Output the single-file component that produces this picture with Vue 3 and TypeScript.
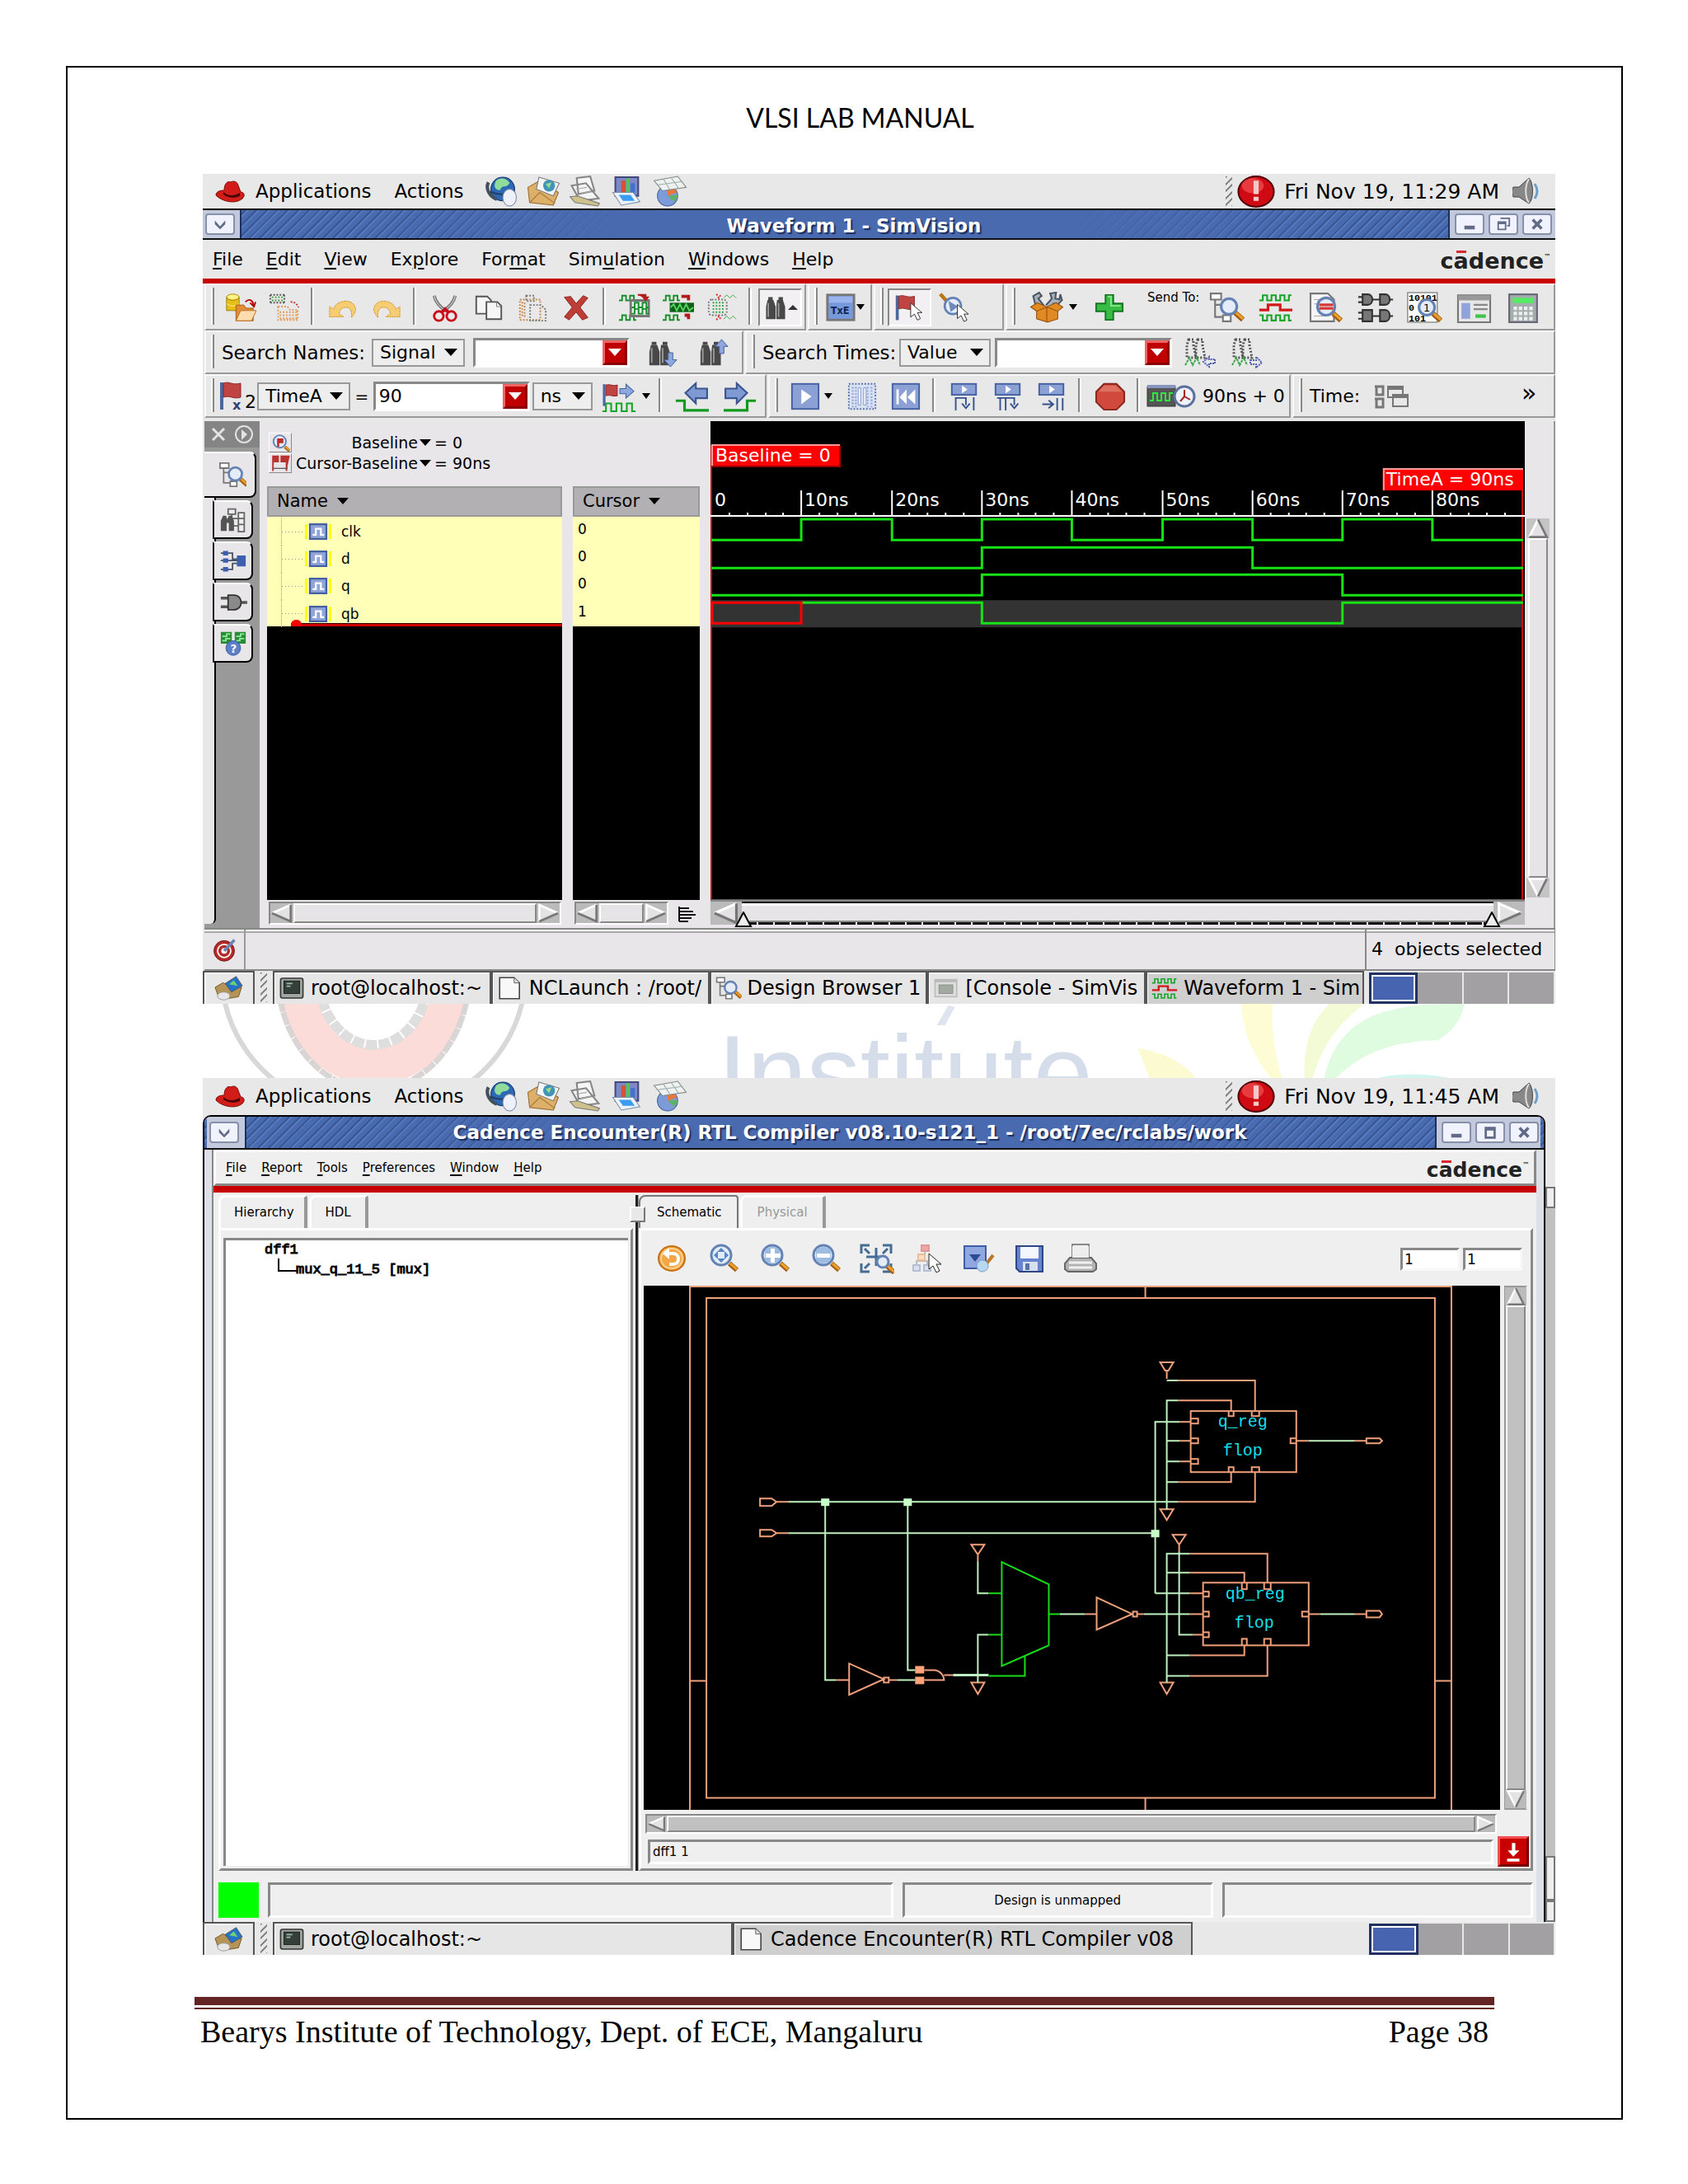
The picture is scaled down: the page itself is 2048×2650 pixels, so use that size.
<script setup lang="ts">
interface Signal { name: string; value: string; steps: [number, number][]; selected?: boolean }
interface Tool { icon: string; label: string }

const signals: Signal[] = [
  { name: 'clk', value: '0', steps: [[0, 0], [10, 1], [20, 0], [30, 1], [40, 0], [50, 1], [60, 0], [70, 1], [80, 0]] },
  { name: 'd', value: '0', steps: [[0, 0], [30, 1], [60, 0]] },
  { name: 'q', value: '0', steps: [[0, 0], [30, 1], [70, 0]] },
  { name: 'qb', value: '1', steps: [[10, 1], [30, 0], [70, 1]], selected: true },
]

const timeX = (ns: number): number => 1 + Math.round(ns * 10.93)
const rowTop = (row: number): number => Math.round(119 + row * 33.6)

function wavePath(signal: Signal, row: number): string {
  const y = (level: number): number => rowTop(row) + (level ? 0 : 25)
  const parts: string[] = []
  signal.steps.forEach(([time, level], i) => {
    parts.push(i === 0 ? `M${timeX(time)} ${y(level)}` : `V${y(level)}`)
    const next = signal.steps[i + 1]
    parts.push(`H${timeX(next ? next[0] : 90)}`)
  })
  return parts.join(' ')
}

const majorTicks: number[] = [0, 10, 20, 30, 40, 50, 60, 70, 80]
const minorTicks: number[] = Array.from({ length: 45 }, (_, i) => i * 2).filter((t) => t % 10 !== 0)

const outline = 'stroke="#555" stroke-width="2"'
const lens = (x: number, y: number, r: number): string =>
  `<path d="M${x + r - 2} ${y + r - 2}l9 8" stroke="#a35d12" stroke-width="6"/><path d="M${x + r - 1} ${y + r - 2}l8 7" stroke="#e9a02c" stroke-width="3"/><circle cx="${x}" cy="${y}" r="${r}" fill="#e3ecf8" stroke="#6483b4" stroke-width="3"/>`
const pulse = (x: number, y: number, c: string): string =>
  `<path d="M${x} ${y + 6}h4v-6h5v6h5v-6h5v6h3" fill="none" stroke="${c}" stroke-width="2"/>`
const bino = (c: string): string =>
  `<g fill="${c}"><path d="M5 8h8l3 9v17H3V17z"/><path d="M18 8h8l3 9v17H17V17z"/><path d="M6 4h6v4H6zM20 4h6v4h-6z"/></g><path d="M6 12v19M20 12v19" stroke="#999" stroke-width="2"/>`
const pointer = (x: number, y: number): string =>
  `<path d="M${x} ${y}v19l5-4 4 8 4-2-4-8h6z" fill="#fff" stroke="#222" stroke-width="1"/>`
const flag = '<path d="M4 2v33" stroke="#4c66a0" stroke-width="4"/><path d="M6 3c7-3 11 3 21 0v17c-9 3-13-3-21 0z" fill="#c04542" stroke="#8d2524"/>'
const blueBox = (x: number, y: number, w: number, h: number): string =>
  `<rect x="${x}" y="${y}" width="${w}" height="${h}" fill="#8ba0d4" stroke="#4460a0" stroke-width="2"/>`
const tree = '<path d="M7 5v24h10M7 15h10" fill="none" stroke="#777" stroke-width="2"/><path d="M2 2h12v7H2zM16 27h9v7h-9z" fill="#fff" stroke="#777" stroke-width="2"/>'

const icons: Record<string, string> = {
  hat: '<path d="M2 20c0-6 8-6 10-6 0-8 4-12 8-10 3-2 8-1 9 4l3 8c4 0 6 4 2 8-8 7-24 4-32-4z" fill="#d11c17" stroke="#7c0d0a"/><path d="M11 16c5 5 13 5 20 1v4c-7 3-15 2-20-2z" fill="#4a0505"/>',
  globe: '<circle cx="22" cy="16" r="14" fill="#2b68b6" stroke="#173564"/><path d="M14 6c6-5 14-2 16 3-4 7-9 1-11 8-5 1-9-4-5-11z" fill="#8fdc9b"/><path d="M5 8c-4 8 2 17 10 20" fill="none" stroke="#44505c" stroke-width="4"/><path d="M7 19c9 4 20 4 29 0" stroke="#243f66" fill="none" stroke-width="2"/><ellipse cx="30" cy="26" rx="8" ry="10" fill="#eef1fa" stroke="#7a86a5"/>',
  mail: '<path d="M2 14l14-8 22 14-6 15L4 32z" fill="#ddb06a" stroke="#95652a"/><path d="M4 32l12-12 18 13" fill="none" stroke="#a87638"/><path d="M15 2l24 7-7 15-20-8z" fill="#f4f5f7" stroke="#777"/><circle cx="27" cy="12" r="7" fill="#4095b9"/><path d="M23 10l7-2-3 7z" fill="#9cda8d"/>',
  writer: '<path d="M10 3l16-2 5 17-19 4zM4 12l17-3 15 18-22 3z" fill="#f5f5f5" stroke="#858585" stroke-width="2"/><path d="M9 16l13-2M14 21l13-2" stroke="#aaa"/><path d="M2 25l9-1 26 9-2 3-27-4z" fill="#cfc18c" stroke="#777"/>',
  impress: '<path d="M6 2h27v22H6z" fill="#7d88c4" stroke="#42487c" stroke-width="2"/><path d="M13 6h5v16h-5z" fill="#d6503e"/><path d="M19 3h4v19h-4z" fill="#56c257"/><path d="M24 9h5v12h-5z" fill="#3b73d0"/><path d="M3 20h24l8 11-22 4z" fill="#edf2fb" stroke="#7a8faa"/><path d="M10 23h14l5 7H15z" fill="#3a9df2"/>',
  calc: '<circle cx="18" cy="24" r="12" fill="#7c9bd8" stroke="#42639d"/><path d="M18 24V12a12 12 0 0 1 11 8z" fill="#e9763a"/><path d="M18 24l12-1a12 12 0 0 1-4 8z" fill="#5eb464"/><path d="M2 6l28-5 10 13-28 4z" fill="#eef1ef" stroke="#7c8884"/><path d="M7 11l28-4M13 4l8 13M22 2l9 13" stroke="#9aabab"/>',
  alert: '<ellipse cx="22" cy="19" rx="21" ry="18" fill="#d00a12" stroke="#520206" stroke-width="2"/><ellipse cx="18" cy="12" rx="13" ry="9" fill="#ff6c6c" opacity=".5"/><path d="M19 6h6v16h-6zM19 25h6v5h-6z" fill="#f5c9c9"/>',
  speaker: '<path d="M1 12h7L20 1c6 6 6 26 0 31L8 24H1c-2-4-2-8 0-12z" fill="#888" stroke="#444"/><path d="M20 2c-5 8-5 22 0 29" stroke="#ddd" fill="none" stroke-width="2"/><path d="M27 8c4 6 4 12 0 18" fill="none" stroke="#6ca0cc" stroke-width="3"/>',
  open: '<ellipse cx="10" cy="5" rx="8" ry="4" fill="#fff387" stroke="#aa8600"/><path d="M2 5v17h16V5c-2 5-14 5-16 0z" fill="#e6c019" stroke="#9b7a00"/><path d="M2 13c4 4 12 4 16 0" stroke="#fff18b" fill="none"/><path d="M14 15h10l3 4h9v16H14z" fill="#e28c36" stroke="#a9530d"/><path d="M14 35l6-13h20l-6 13z" fill="#ffdcae" stroke="#b66a25"/><path d="M26 11c5-5 10-2 10 4m-4-3l5 5 2-6" stroke="#b40000" stroke-width="2" fill="none"/>',
  openOff: '<g stroke-dasharray="2 2" stroke-width="2" fill="none"><path d="M2 2h18M2 12h18M2 2v11M20 2v11" stroke="#555"/><path d="M4 5h14M4 9h14" stroke="#3a9d3a"/><path d="M12 17h12l3 4h10v13H12zM14 24h22M14 28h22M14 32h22" stroke="#e39a54"/><path d="M28 11c5 0 8 2 10 7" stroke="#c22"/></g>',
  undo: '<path d="M3 30V17l5 3c4-12 23-13 27-4 3 6 0 10-4 15 1-9-2-14-8-13-5 0-7 4-8 8l6 4z" fill="#f7cd74" stroke="#d28a15" stroke-dasharray="2 1"/>',
  redo: '<path d="M37 30V17l-5 3C28 8 9 7 5 16c-3 6 0 10 4 15-1-9 2-14 8-13 5 0 7 4 8 8l-6 4z" fill="#f7cd74" stroke="#d28a15" stroke-dasharray="2 1"/>',
  cut: '<path d="M6 3c2 9 8 15 16 20M33 3c-2 9-8 15-16 20" stroke="#777" stroke-width="4" fill="none"/><path d="M6 3c2 9 8 15 16 20M33 3c-2 9-8 15-16 20" stroke="#eee" stroke-width="1" fill="none"/><circle cx="12" cy="29" r="6" fill="none" stroke="#c90d1b" stroke-width="3"/><circle cx="28" cy="29" r="6" fill="none" stroke="#c90d1b" stroke-width="3"/><path d="M16 24l4-4 4 4" stroke="#c90d1b" stroke-width="4" fill="none"/>',
  copy: `<path d="M4 4h14l5 5v17H4z" fill="#f6f6f6" ${outline}/><path d="M17 11h14l5 5v17H17z" fill="#f6f6f6" ${outline}/><path d="M30 11v6h6" fill="none" stroke="#777"/>`,
  paste: '<g stroke-dasharray="2 2" stroke-width="2" fill="none"><path d="M4 8h26v26H4zM7 11v20M10 12v20" stroke="#c68448"/><path d="M12 3h10v7H12zM17 15h14l6 6v14H17z" stroke="#777"/></g>',
  del: '<path d="M5 5l8-1 7 9 9-10 6 3-10 12 10 13-7 3-8-10-9 10-6-4 10-12z" fill="#bc3e36" stroke="#8c211c"/>',
  waveAdd: `${pulse(0, 3, '#178f28')}${pulse(0, 28, '#178f28')}<path d="M15 9h23v20H15z" fill="#e5eee5" stroke="#777" stroke-width="3"/>${pulse(16, 12, '#178f28')}${pulse(16, 20, '#178f28')}<path d="M24 2h10v5m-3-2h6l-3 4z" stroke="#b41c1c" stroke-width="2" fill="#b41c1c"/>`,
  waveMid: `${pulse(0, 3, '#178f28')}${pulse(0, 28, '#178f28')}<path d="M9 12h31v12H9z" fill="#125e1b"/><path d="M10 18l4-4 4 8 4-8 4 8 4-8 4 8 5-4" stroke="#50d85b" stroke-width="2" fill="none"/><path d="M24 4h9v5M28 28h5v5" stroke="#b41c1c" stroke-width="4" fill="none"/>`,
  waveOff: '<g fill="none" stroke-width="2" stroke-dasharray="2 2"><rect x="3" y="8" width="23" height="20" rx="4" stroke="#777"/><path d="M8 12h14M8 16h14M8 20h14M8 24h14" stroke="#2ba33a"/><path d="M13 1l3 5 3-5M13 34l3-5 3 5" stroke="#d22"/></g><path d="M22 6l4-4 4 4 4-4 4 4M22 33l4-4 4 4 4-4 4 4" stroke="#3aa548" fill="none"/>',
  bino: bino('#484848'),
  txe: '<rect x="3" y="2" width="34" height="32" fill="#7898dc" stroke="#777" stroke-width="3"/><path d="M5 4h30v8H5z" fill="#9ab5ee"/><text x="7" y="26" font-family="DejaVu Sans" font-weight="bold" font-size="12" fill="#112755">TxE</text>',
  flagPointer: flag + pointer(22, 12),
  lensPointer: '<path d="M3 2l10 11" stroke="#b87618" stroke-width="5"/><circle cx="20" cy="18" r="11" fill="#e5edfa" stroke="#6483b4" stroke-width="3"/><path d="M14 11l13 8-10 7z" fill="#7189b8"/>' + pointer(26, 16),
  box: '<path d="M8 17L5 5l7-4 3 4-4 3 7 9M20 16l7-8-2-6 7-1-1 7 5 1 1-6 2 7-5 5-5-1-5 7" fill="#a5b1bd" stroke="#4c5660" stroke-width="2"/><path d="M2 18l8-5 11 5 11-5 8 5-6 5v9l-12 4-13-4v-9z" fill="#e18a23" stroke="#8f4c08"/><path d="M21 18v18M9 23l12-5 13 5" fill="none" stroke="#8f4c08"/>',
  plus: '<path d="M15 3h10v11h12v10H25v11H15V24H3V14h12z" fill="#37bc45" stroke="#167522" stroke-width="2"/><path d="M18 5h4v12h12" fill="none" stroke="#8be78f" stroke-width="2"/>',
  treeLens: tree + lens(23, 17, 9),
  waves: '<path d="M1 10h4V4h5v6h5V4h5v6h5V4h5v6h5V4h3M1 27h4v6h5v-6h5v6h5v-6h5v6h5v-6h5v6h3" stroke="#15a527" stroke-width="2" fill="none"/><path d="M1 21h10v-6h14v6h14" stroke="#d21919" stroke-width="3" fill="none"/>',
  docLens: `<path d="M3 2h20l7 7v25H3z" fill="#f6f6f6" stroke="#777" stroke-width="2"/><path d="M7 9h13M7 14h12M7 28h14" stroke="#aaa"/>${lens(21, 17, 10)}<path d="M13 15h16M13 19h16" stroke="#d53a36" stroke-width="3"/>`,
  gates: '<g fill="#777" stroke="#333" stroke-width="2"><path d="M6 3h6c7 0 7 12 0 12H6zM26 3h6c7 0 7 12 0 12h-6zM6 21h11v13H6zM26 21h6c7 0 7 13 0 13h-6z"/></g><path d="M1 6h5M1 12h5M17 9h9M1 24h5M1 31h5M17 28h9M38 9h3M38 28h3" stroke="#333" stroke-width="2"/>',
  bits: `<rect x="1" y="1" width="34" height="34" fill="#fff" stroke="#666"/><g font-family="Liberation Mono" font-size="11" font-weight="bold"><text x="2" y="10">10101</text><text x="2" y="22">0</text><text x="2" y="34">101</text></g>${lens(23, 18, 9)}<text x="19" y="23" font-family="DejaVu Sans" font-size="12">1</text>`,
  pane: '<path d="M2 4h37v31H2z" fill="#e7e7e7" stroke="#777" stroke-width="2"/><path d="M2 4h37v6H2z" fill="#999"/><path d="M6 13h10v18H6z" fill="#8fa3da"/><path d="M20 15h16M20 20h16" stroke="#888" stroke-width="2"/><path d="M22 26h12v4H22z" fill="#3ec24a"/>',
  calculator: '<rect x="4" y="3" width="32" height="32" fill="#a4adad" stroke="#667" stroke-width="2"/><path d="M8 7h24v6H8z" fill="#53ec62"/><path d="M9 19h22M9 25h22M9 31h22" stroke="#eee" stroke-width="4" stroke-dasharray="4 2"/>',
  findDown: bino('#484848') + '<path d="M27 18h6v9h5l-8 9-8-9h5z" fill="#8ea8de" stroke="#45609e"/>',
  findUp: bino('#484848') + '<path d="M27 19h6v-9h5l-8-9-8 9h5z" fill="#8ea8de" stroke="#45609e"/>',
  findPrev: '<path d="M6 3h6v7l3 15H4V10zM17 3h6v7l3 15H15V10z" fill="none" stroke="#555" stroke-width="3" stroke-dasharray="2 2"/><path d="M2 34l5-9 4 9 5-9 4 9" stroke="#3aa548" fill="none" stroke-width="2" stroke-dasharray="3 1"/><path d="M38 27v5h-7v4l-7-6 7-6v3z" fill="none" stroke="#5560b5" stroke-width="2" stroke-dasharray="2 1"/>',
  findNext: '<path d="M6 3h6v7l3 15H4V10zM17 3h6v7l3 15H15V10z" fill="none" stroke="#555" stroke-width="3" stroke-dasharray="2 2"/><path d="M2 34l5-9 4 9 5-9 4 9" stroke="#3aa548" fill="none" stroke-width="2" stroke-dasharray="3 1"/><path d="M24 28h7v-4l7 7-7 6v-4h-7z" fill="none" stroke="#5560b5" stroke-width="2" stroke-dasharray="2 1"/>',
  flagTwo: flag + '<text x="17" y="35" font-family="DejaVu Sans" font-size="16" font-weight="bold" fill="#2d4376">x</text>',
  flagWave: '<path d="M3 4v25" stroke="#4c66a0" stroke-width="3"/><path d="M5 5c5-2 8 2 13 0v12c-5 2-8-2-13 0z" fill="#c04542" stroke="#8d2524"/><path d="M21 9h7V4l9 8-9 8v-5h-7z" fill="#8ea8de" stroke="#45609e"/><path d="M1 35h4v-9h6v9h6v-9h6v9h6v-9h6v9h4" fill="none" stroke="#15a527" stroke-width="2"/>',
  edgeLeft: '<path d="M12 14L24 3v6h13v11H24v6z" fill="#7f9ad3" stroke="#3a5591" stroke-width="2"/><path d="M1 23h10v11h28" fill="none" stroke="#0f9a1e" stroke-width="3"/>',
  edgeRight: '<path d="M29 14L17 3v6H4v11h13v6z" fill="#7f9ad3" stroke="#3a5591" stroke-width="2"/><path d="M2 34h27V23h10" fill="none" stroke="#0f9a1e" stroke-width="3"/>',
  play: blueBox(3, 2, 34, 32) + '<path d="M15 9l13 9-13 10z" fill="#fff"/>',
  pause: '<rect x="3" y="2" width="34" height="32" fill="#d8e0f2" stroke="#5470b0" stroke-width="2" stroke-dasharray="2 2"/><path d="M8 6v26M32 6v26M27 6v26M12 6v26" stroke="#8aa0d4" stroke-width="2" stroke-dasharray="2 2"/><path d="M15 7h3v22h-3zM22 7h3v22h-3z" fill="#fff" stroke="#7c94cc"/>',
  rewind: blueBox(3, 2, 34, 32) + '<path d="M8 9h3v19H8zM21 9v19l-9-9zM32 9v19l-10-9z" fill="#fff"/>',
  stepIn: blueBox(4, 2, 31, 14) + '<path d="M17 4l7 5-7 5z" fill="#fff"/><path d="M9 19v17M9 20h13v9m-5-2l5 6 5-6M32 19v17" stroke="#35508e" stroke-width="2" fill="none"/>',
  stepOver: blueBox(4, 2, 31, 14) + '<path d="M17 4l7 5-7 5z" fill="#fff"/><path d="M6 20h22v9m-5-2l5 6 5-6M10 20v16M17 20v16" stroke="#35508e" stroke-width="2" fill="none"/>',
  stepOut: blueBox(4, 2, 31, 14) + '<path d="M17 4l7 5-7 5z" fill="#fff"/><path d="M8 28h13m-5-5l6 5-6 5M27 20v16M34 20v16" stroke="#35508e" stroke-width="2" fill="none"/>',
  stop: '<path d="M12 2h16l10 10v13L28 35H12L2 25V12z" fill="#d0493c" stroke="#87241c" stroke-width="2"/><path d="M12 4h15l8 8H5z" fill="#e88a7c" opacity=".6"/>',
  clock: '<rect x="1" y="6" width="34" height="24" fill="#555" stroke="#333"/><path d="M1 4h34v4H1z" fill="#8695bd"/><path d="M4 23h4v-9h5v9h5v-9h5v9h5v-9h4" fill="none" stroke="#2ee83d" stroke-width="2"/><circle cx="46" cy="18" r="12" fill="#eef3fc" stroke="#5b719d" stroke-width="3"/><path d="M46 10v8l7 4M46 18l-5 6" stroke="#a22" fill="none" stroke-width="2"/>',
  panes: '<g fill="none" stroke="#777" stroke-width="3"><path d="M3 5h10v10H5V5M3 20h10v10H5V20"/></g><rect x="19" y="5" width="18" height="13" fill="#e8e8e8" stroke="#777" stroke-width="2"/><path d="M19 5h18v4H19z" fill="#777"/><rect x="25" y="15" width="18" height="14" fill="#e8e8e8" stroke="#777" stroke-width="2"/><path d="M25 15h18v4H25z" fill="#777"/>',
  binoTree: '<path d="M12 3h10v7H12zM26 8h8v26h-8zM17 10v6h9M17 16v10h9M26 16h8M26 24h8" fill="#eee" stroke="#666" stroke-width="2"/><path d="M2 19l3-7h4l2 5 2-5h4l3 7v14h-7V22h-3v11H2z" fill="#555"/>',
  nodes: '<path d="M2 7h16v8h10M2 17h26M2 29h16v-8h10" fill="none" stroke="#456" stroke-width="2"/><path d="M5 4h7v6H5zM5 14h7v6H5zM5 26h7v6H5zM24 10h12v15H24z" fill="#3e5fae"/>',
  gate: '<path d="M2 12h10M2 24h10M30 18h8" stroke="#555" stroke-width="4"/><path d="M12 8h8c13 0 13 20 0 20h-8z" fill="#8a8a8a" stroke="#333" stroke-width="2"/>',
  help: '<path d="M2 2h15v16H2zM21 2h15v16H21z" fill="#2a8a38"/><path d="M4 8h6v-3h5M4 14h5v-3h6M23 8h6v-3h5M23 14h5v-3h6" stroke="#8af097" fill="none" stroke-width="2"/><circle cx="19" cy="24" r="10" fill="#5b7fc8" stroke="#34569c"/><text x="15" y="30" font-family="DejaVu Sans" font-size="15" font-weight="bold" fill="#fff">?</text>',
  target: '<circle cx="17" cy="20" r="14" fill="#b52a25" stroke="#661311"/><circle cx="17" cy="20" r="9" fill="none" stroke="#fff" stroke-width="2"/><circle cx="17" cy="20" r="4" fill="#fff"/><path d="M17 20L31 5" stroke="#6a84b8" stroke-width="4"/>',
  desktop: '<path d="M2 17l10-6 10 5 14 1-4 12-12 2-14-3z" fill="#b69458" stroke="#705522"/><path d="M15 12L29 3l8 12-14 8z" fill="#2374c9" stroke="#555"/><path d="M20 13l6-5 5 7z" fill="#70d170"/><ellipse cx="13" cy="28" rx="8" ry="5" fill="#e7e7e7" stroke="#999"/>',
  terminal: '<rect x="3" y="3" width="34" height="30" rx="3" fill="#a0a6a0" stroke="#333" stroke-width="2"/><rect x="8" y="7" width="24" height="19" fill="#344039" stroke="#111"/><path d="M12 11h9M12 15h6" stroke="#9fb7a5" stroke-width="2"/>',
  page: '<path d="M4 2h22l8 8v24H4z" fill="#f8f8f8" stroke="#444" stroke-width="2"/><path d="M26 2v8h8" fill="#ddd" stroke="#444"/>',
  console: '<rect x="3" y="5" width="33" height="26" fill="#ddd" stroke="#bbb" stroke-width="2"/><path d="M3 5h33v4H3z" fill="#bbb"/><rect x="9" y="13" width="21" height="13" fill="#a2aaa2" stroke="#7d877d"/>',
  refresh: '<ellipse cx="20" cy="18" rx="16" ry="15" fill="#f4a644" stroke="#c66e12" stroke-width="2"/><ellipse cx="20" cy="18" rx="13" ry="12" fill="none" stroke="#fbd08f" stroke-width="2"/><path d="M14 12h8c8 0 8 13 0 13h-5" fill="none" stroke="#fff" stroke-width="4"/><path d="M9 12l8-7v14z" fill="#fff"/>',
  zoomFit: lens(18, 14, 12) + '<path d="M18 5l5 5H13zM18 23l5-5H13zM9 14l5-5v10zM27 14l-5-5v10z" fill="#5688c9"/>',
  zoomIn: lens(18, 14, 12) + '<path d="M9 8a12 12 0 0 1 18 0v12a12 12 0 0 1-18 0z" fill="#9dbce2"/><path d="M16 6h5v6h6v5h-6v6h-5v-6h-6v-5h6z" fill="#fff"/>',
  zoomOut: lens(18, 14, 12) + '<path d="M9 8a12 12 0 0 1 18 0v12a12 12 0 0 1-18 0z" fill="#9dbce2"/><path d="M10 12h16v5H10z" fill="#fff"/>',
  zoomArea: '<path d="M2 12V2h10M28 2h10v10M2 24v10h10M38 24v10H28M20 5v22M8 16h24M6 6l6 6M34 6l-6 6M6 30l6-6" fill="none" stroke="#456d94" stroke-width="3"/>' + lens(28, 22, 7),
  hierarchy: '<path d="M17 8v8M7 27v-6h13v6M13 16v5" fill="none" stroke="#bbb" stroke-width="2"/><g stroke-width="2"><path d="M13 2h9v7h-9z" fill="#f3a6a6" stroke="#dd9a9a"/><path d="M9 13h8v7H9z" fill="#fce0c4" stroke="#e8bf98"/><path d="M3 26h8v7H3zM16 26h8v7h-8z" fill="#dbe1ee" stroke="#b4bdd2"/></g>' + pointer(22, 12),
  dropLens: '<rect x="3" y="3" width="26" height="27" fill="#90a7e0" stroke="#3f5ca6" stroke-width="2"/><path d="M9 13h14l-7 9z" fill="#2b4b96"/><path d="M30 24l8-10" stroke="#b97529" stroke-width="4"/><circle cx="25" cy="27" r="7" fill="#b9d7f0" stroke="#6ba0cc"/>',
  save: '<path d="M4 3h32v31H8l-4-4z" fill="#6583cf" stroke="#2f4688" stroke-width="2"/><path d="M9 4h22v14H9z" fill="#f4f7fc"/><path d="M12 22h18v11H12z" fill="#d9dfec"/><path d="M15 24h5v8h-5z" fill="#5572b2"/>',
  print: '<path d="M10 1h20v17H10z" fill="#eee" stroke="#888" stroke-width="2"/><path d="M7 17h26l6 7v7l-4 3H5l-4-3v-7z" fill="#b4b4b4" stroke="#666" stroke-width="2"/><path d="M6 23h28M6 29h28" stroke="#f0f0f0" stroke-width="3"/><path d="M10 3h20v14H10z" fill="#eee"/>',
  download: '<path d="M13 5h5v11h6l-9 9-8-9h6zM6 28h18v4H6z" fill="#fff"/>',
  probe: lens(18, 15, 12) + '<path d="M13 9h12v9h-8v7h-4z" fill="#bd2b2e"/>',
  span: '<path d="M5 32V4h10v10H7M31 32V4h6M31 4H21v10h9" fill="#b9332f" stroke="#b9332f" stroke-width="3"/><path d="M5 27h28" stroke="#555" stroke-width="2"/>',
  wave: '<rect x="2" y="2" width="36" height="32" fill="#91a5d8" stroke="#4460a0" stroke-width="4"/><path d="M8 25h7V12h11v13h7" fill="none" stroke="#fff" stroke-width="4"/>',
  left: '<path d="M2 18L36 3v30z" fill="#e4e2e4"/><path d="M2 18L36 3" stroke="#fff" stroke-width="4"/><path d="M2 18l34 15V3" fill="none" stroke="#777" stroke-width="4"/>',
  right: '<path d="M38 18L4 3v30z" fill="#e4e2e4"/><path d="M4 33V3l34 15" stroke="#fff" stroke-width="4" fill="none"/><path d="M38 18L4 33" stroke="#777" stroke-width="4"/>',
  up: '<path d="M20 2L4 34h32z" fill="#e4e2e4"/><path d="M4 34L20 2" stroke="#fff" stroke-width="4"/><path d="M20 2l16 32H4" fill="none" stroke="#777" stroke-width="4"/>',
  down: '<path d="M20 34L4 2h32z" fill="#e4e2e4"/><path d="M20 34L4 2h32" stroke="#fff" fill="none" stroke-width="4"/><path d="M36 2L20 34" stroke="#777" stroke-width="4"/>',
}

const launchers: Tool[] = [
  { icon: 'globe', label: 'Web browser' },
  { icon: 'mail', label: 'Email' },
  { icon: 'writer', label: 'Word processor' },
  { icon: 'impress', label: 'Presentation' },
  { icon: 'calc', label: 'Spreadsheet' },
]
const editTools: Tool[][] = [
  [{ icon: 'open', label: 'Open database' }, { icon: 'openOff', label: 'Close database' }],
  [{ icon: 'undo', label: 'Undo' }, { icon: 'redo', label: 'Redo' }],
  [{ icon: 'cut', label: 'Cut' }, { icon: 'copy', label: 'Copy' }, { icon: 'paste', label: 'Paste' }, { icon: 'del', label: 'Delete' }],
  [{ icon: 'waveAdd', label: 'Expand' }, { icon: 'waveMid', label: 'Collapse' }, { icon: 'waveOff', label: 'Ungroup' }],
]
const sendTools: Tool[] = [
  { icon: 'treeLens', label: 'Design browser' },
  { icon: 'waves', label: 'Waveform' },
  { icon: 'docLens', label: 'Source browser' },
  { icon: 'gates', label: 'Schematic' },
  { icon: 'bits', label: 'Memory viewer' },
  { icon: 'pane', label: 'Register' },
  { icon: 'calculator', label: 'Calculator' },
]
const dockTabs: Tool[] = [
  { icon: 'treeLens', label: 'Browser' },
  { icon: 'binoTree', label: 'Search' },
  { icon: 'nodes', label: 'Drivers' },
  { icon: 'gate', label: 'Cells' },
  { icon: 'help', label: 'Groups' },
]
const schematicTools: Tool[] = [
  { icon: 'refresh', label: 'Redraw' },
  { icon: 'zoomFit', label: 'Zoom fit' },
  { icon: 'zoomIn', label: 'Zoom in' },
  { icon: 'zoomOut', label: 'Zoom out' },
  { icon: 'zoomArea', label: 'Zoom area' },
  { icon: 'hierarchy', label: 'Hierarchy' },
  { icon: 'dropLens', label: 'Probe' },
  { icon: 'save', label: 'Save' },
  { icon: 'print', label: 'Print' },
]
const simMenus: [string, string, string][] = [
  ['', 'F', 'ile'], ['', 'E', 'dit'], ['', 'V', 'iew'], ['Ex', 'p', 'lore'], ['For', 'm', 'at'],
  ['Sim', 'u', 'lation'], ['', 'W', 'indows'], ['', 'H', 'elp'],
]
const rtlMenus: string[] = ['File', 'Report', 'Tools', 'Preferences', 'Window', 'Help']
const simTasks: { icon: string; text: string }[] = [
  { icon: 'terminal', text: 'root@localhost:~' },
  { icon: 'page', text: 'NCLaunch : /root/' },
  { icon: 'treeLens', text: 'Design Browser 1' },
  { icon: 'console', text: '[Console - SimVis' },
  { icon: 'waves', text: 'Waveform 1 - Sim' },
]
const rtlTasks: { icon: string; text: string }[] = [
  { icon: 'terminal', text: 'root@localhost:~' },
  { icon: 'page', text: 'Cadence Encounter(R) RTL Compiler v08' },
]
</script>

<template>
  <main class="sheet">
    <header class="running-head">VLSI LAB MANUAL</header>

    <section class="shot">
      <nav class="panel">
        <svg class="hat" viewBox="0 0 38 30" v-html="icons.hat"></svg>
        <a href="#" class="apps">Applications</a><a href="#" class="acts">Actions</a>
        <button v-for="l in launchers" :key="l.icon" class="launch" :aria-label="l.label"><svg viewBox="0 0 42 37" v-html="icons[l.icon]"></svg></button>
        <span class="grow"></span><i class="grip"></i>
        <svg class="alert" viewBox="0 0 44 38" v-html="icons.alert"></svg>
        <time>Fri Nov 19, 11:29 AM</time>
        <svg class="speaker" viewBox="0 0 34 34" v-html="icons.speaker"></svg>
      </nav>

      <div class="titlebar">
        <span class="frame-cell"><button aria-label="Window menu"><svg viewBox="0 0 20 20"><path d="M3 5l7 8 7-8v5l-7 7-7-7z" fill="#616a86" /></svg></button></span>
        <h2>Waveform 1 - SimVision</h2>
        <span class="frame-cell end">
          <button aria-label="Minimize"><svg viewBox="0 0 20 20"><path d="M3 12h14v5H3z" fill="#616a86" /></svg></button>
          <button aria-label="Restore"><svg viewBox="0 0 20 20"><path d="M6 2h12v10h-3M3 7h10v10H3zM3 9h10" fill="none" stroke="#616a86" stroke-width="2" /></svg></button>
          <button aria-label="Close"><svg viewBox="0 0 20 20"><path d="M4 4l12 12M16 4L4 16" stroke="#616a86" stroke-width="4" /></svg></button>
        </span>
      </div>

      <nav class="menus sim">
        <a v-for="m in simMenus" :key="m[1] + m[2]" href="#">{{ m[0] }}<u>{{ m[1] }}</u>{{ m[2] }}</a>
        <span class="brand">c<b>a</b>dence<small>™</small></span>
      </nav>
      <div class="redline"></div>

      <div class="bar tall">
        <div class="group">
          <i class="handle"></i>
          <template v-for="(set, s) in editTools" :key="s">
            <button v-for="t in set" :key="t.icon" class="tool" :aria-label="t.label"><svg viewBox="0 0 40 36" v-html="icons[t.icon]"></svg></button>
            <i class="sep"></i>
          </template>
          <button class="tool pressed" aria-label="Search"><svg class="half" viewBox="0 0 32 36" v-html="icons.bino"></svg><i class="caret up"></i></button>
        </div>
        <div class="group">
          <i class="handle"></i>
          <button class="tool drop" aria-label="Text format"><svg viewBox="0 0 40 36" v-html="icons.txe"></svg><i class="caret small"></i></button>
        </div>
        <div class="group cursors">
          <i class="handle"></i>
          <button class="tool pressed" aria-label="Cursor mode"><svg viewBox="0 0 42 36" v-html="icons.flagPointer"></svg></button>
          <button class="tool" aria-label="Zoom mode"><svg viewBox="0 0 42 40" v-html="icons.lensPointer"></svg></button>
        </div>
        <div class="group wide tools">
          <i class="handle"></i>
          <button class="tool kit" aria-label="Tools"><svg class="big" viewBox="0 0 42 37" v-html="icons.box"></svg><i class="caret small"></i></button>
          <button class="tool add" aria-label="Add"><svg viewBox="0 0 40 38" v-html="icons.plus"></svg></button>
          <span class="send">Send To:</span>
          <div class="sendset">
            <button v-for="t in sendTools" :key="t.icon" class="tool" :aria-label="t.label"><svg class="big" viewBox="0 0 42 36" v-html="icons[t.icon]"></svg></button>
          </div>
        </div>
      </div>

      <div class="bar">
        <div class="group names">
          <i class="handle"></i>
          <label for="names">Search Names:</label>
          <span class="combo signal"><select id="names"><option>Signal</option></select><i class="caret"></i></span>
          <span class="entry first"><input type="text" aria-label="Search names text" /><button aria-label="History"><i class="caret white"></i></button></span>
          <button class="tool find" aria-label="Find next"><svg viewBox="0 0 40 36" v-html="icons.findDown"></svg></button>
          <button class="tool find" aria-label="Find previous"><svg viewBox="0 0 40 36" v-html="icons.findUp"></svg></button>
        </div>
        <div class="group wide">
          <i class="handle"></i>
          <label for="times">Search Times:</label>
          <span class="combo value"><select id="times"><option>Value</option></select><i class="caret"></i></span>
          <span class="entry later"><input type="text" aria-label="Search times text" /><button aria-label="History"><i class="caret white"></i></button></span>
          <button class="tool time" aria-label="Previous edge"><svg class="big" viewBox="0 0 40 38" v-html="icons.findPrev"></svg></button>
          <button class="tool time" aria-label="Next edge"><svg class="big" viewBox="0 0 40 38" v-html="icons.findNext"></svg></button>
        </div>
      </div>

      <div class="bar">
        <div class="group timea">
          <i class="handle"></i>
          <span class="flagtwo"><svg viewBox="0 0 32 38" v-html="icons.flagTwo"></svg>2</span>
          <span class="combo cursor"><select aria-label="Cursor"><option>TimeA</option></select><i class="caret"></i></span>
          <span class="eq">=</span>
          <span class="entry first"><input type="text" value="90" aria-label="Cursor time" /><button aria-label="History"><i class="caret white"></i></button></span>
          <span class="combo unit"><select aria-label="Unit"><option>ns</option></select><i class="caret"></i></span>
          <button class="tool goto" aria-label="Go to cursor"><svg class="big" viewBox="0 0 40 36" v-html="icons.flagWave"></svg><i class="caret small"></i></button>
          <i class="sep"></i>
          <button class="tool edge" aria-label="Previous edge"><svg class="big" viewBox="0 0 40 36" v-html="icons.edgeLeft"></svg></button>
          <button class="tool edge" aria-label="Next edge"><svg class="big" viewBox="0 0 40 36" v-html="icons.edgeRight"></svg></button>
        </div>
        <div class="group run">
          <i class="handle"></i>
          <button class="tool kit" aria-label="Run"><svg viewBox="0 0 40 36" v-html="icons.play"></svg><i class="caret small"></i></button>
          <button class="tool" aria-label="Pause"><svg viewBox="0 0 40 36" v-html="icons.pause"></svg></button>
          <button class="tool" aria-label="Reset"><svg viewBox="0 0 40 36" v-html="icons.rewind"></svg></button>
          <i class="sep"></i>
          <button class="tool" aria-label="Step in"><svg viewBox="0 0 40 36" v-html="icons.stepIn"></svg></button>
          <button class="tool" aria-label="Step over"><svg viewBox="0 0 40 36" v-html="icons.stepOver"></svg></button>
          <button class="tool" aria-label="Step out"><svg viewBox="0 0 40 36" v-html="icons.stepOut"></svg></button>
          <i class="sep"></i>
          <button class="tool" aria-label="Stop"><svg viewBox="0 0 40 36" v-html="icons.stop"></svg></button>
          <i class="sep"></i>
          <svg class="clock" viewBox="0 0 60 36" v-html="icons.clock"></svg>
          <span class="now">90ns + 0</span>
        </div>
        <div class="group wide">
          <i class="handle"></i>
          <span class="timelabel">Time:</span>
          <svg class="panes" viewBox="0 0 46 34" v-html="icons.panes"></svg>
          <span class="grow"></span>
          <button class="more" aria-label="More">»</button>
        </div>
      </div>

      <div class="workspace">
        <aside class="dock">
          <div class="dock-head">
            <svg viewBox="0 0 56 24"><path d="M4 5l14 14M18 5L4 19" stroke="#e2e2e2" stroke-width="3" /><circle cx="42" cy="12" r="10" fill="none" stroke="#e2e2e2" stroke-width="2" /><path d="M39 6l7 6-7 7z" fill="#e2e2e2" /></svg>
          </div>
          <div class="dock-body">
            <button v-for="t in dockTabs" :key="t.icon" class="dock-tab" :aria-label="t.label"><svg viewBox="0 0 38 36" v-html="icons[t.icon]"></svg></button>
          </div>
        </aside>

        <div class="signals">
          <div class="info">
            <button aria-label="Baseline"><svg viewBox="0 0 38 34" v-html="icons.probe"></svg></button><span class="what">Baseline</span><i class="caret"></i><span>= 0</span>
            <button aria-label="Span"><svg viewBox="0 0 38 34" v-html="icons.span"></svg></button><span class="what">Cursor-Baseline</span><i class="caret"></i><span>= 90ns</span>
          </div>
          <div class="columns">
            <div class="col name-col">
              <div class="dark">
                <table>
                  <thead><tr><th>Name <i class="caret"></i></th></tr></thead>
                  <tbody><tr v-for="s in signals" :key="s.name"><td><i class="twig"></i><svg viewBox="0 0 40 36" v-html="icons.wave"></svg>{{ s.name }}</td></tr></tbody>
                </table>
                <i class="insertion"></i>
              </div>
              <div class="hscroll"><svg viewBox="0 0 40 36" v-html="icons.left"></svg><i class="thumb"></i><svg viewBox="0 0 40 36" v-html="icons.right"></svg></div>
            </div>
            <div class="col value-col">
              <div class="dark">
                <table>
                  <thead><tr><th>Cursor <i class="caret"></i></th></tr></thead>
                  <tbody><tr v-for="s in signals" :key="s.name"><td>{{ s.value }}</td></tr></tbody>
                </table>
              </div>
              <div class="pair">
                <div class="hscroll"><svg viewBox="0 0 40 36" v-html="icons.left"></svg><i class="thumb"></i><svg viewBox="0 0 40 36" v-html="icons.right"></svg></div>
                <svg class="lines" viewBox="0 0 24 20"><path d="M2 1v18M2 3h12M2 7h17M2 11h20M2 15h15M2 19h11" stroke="#111" stroke-width="2" fill="none" /></svg>
              </div>
            </div>
          </div>
        </div>

        <div class="waves">
          <svg class="plot" viewBox="0 0 987 580" role="img" aria-label="Waveforms">
            <rect width="987" height="580" fill="#000" />
            <rect y="217" width="985" height="33" fill="#333" />
            <path d="M1 29V580M984 84V580" stroke="#c60d0d" stroke-width="2" />
            <g font-family="DejaVu Sans, sans-serif" font-size="22" fill="#fff">
              <rect x="2" y="29" width="155" height="26" fill="#f00" /><path d="M2 55h155V30" fill="none" stroke="#900" stroke-width="2" />
              <path d="M2 54V29h155" stroke="#ff9b9b" stroke-width="2" fill="none" />
              <text x="6" y="49">Baseline = 0</text>
              <rect x="815" y="57" width="170" height="27" fill="#f00" />
              <path d="M816 84V58h169" stroke="#ff9b9b" stroke-width="2" fill="none" />
              <text x="819" y="78">TimeA = 90ns</text>
              <text v-for="t in majorTicks" :key="t" :x="timeX(t) + 4" y="103">{{ t === 0 ? '0' : t + 'ns' }}</text>
            </g>
            <g stroke="#fff" stroke-width="2">
              <path d="M0 115H987" />
              <path v-for="t in majorTicks.slice(1)" :key="'a' + t" :d="`M${timeX(t)} 84V115`" />
              <path v-for="t in minorTicks" :key="'i' + t" :d="`M${timeX(t)} 111V115`" />
            </g>
            <g fill="none" stroke="#16e216" stroke-width="3">
              <path v-for="(s, i) in signals" :key="s.name" :d="wavePath(s, i)" />
            </g>
            <path d="M2 220h108v25H2z" fill="none" stroke="#f00" stroke-width="3" />
          </svg>
          <div class="timescroll">
            <svg class="arrow" viewBox="0 0 40 36" v-html="icons.left"></svg>
            <div class="track">
              <svg class="mark" viewBox="0 0 22 20"><path d="M11 1l9 17H2z" fill="#eee" stroke="#000" stroke-width="2" /></svg>
              <svg class="mark" viewBox="0 0 22 20"><path d="M11 1l9 17H2z" fill="#eee" stroke="#000" stroke-width="2" /></svg>
            </div>
            <svg class="arrow" viewBox="0 0 40 36" v-html="icons.right"></svg>
          </div>
        </div>
        <div class="vscroll sim-v"><svg viewBox="0 0 40 36" v-html="icons.up"></svg><i class="thumb"></i><svg viewBox="0 0 40 36" v-html="icons.down"></svg></div>
      </div>

      <div class="statusbar">
        <span class="aim"><svg viewBox="0 0 34 36" v-html="icons.target"></svg></span>
        <span class="grow"></span>
        <span class="count">4&nbsp; objects selected</span>
      </div>

      <div class="taskbar">
        <button class="desk" aria-label="Show desktop"><svg viewBox="0 0 40 36" v-html="icons.desktop"></svg></button><i class="grip"></i>
        <button v-for="(t, i) in simTasks" :key="t.text" class="task" :class="{ active: i === 4 }"><svg viewBox="0 0 40 36" v-html="icons[t.icon]"></svg><span>{{ t.text }}</span></button>
        <div class="pager"><i class="on"></i><i></i><i></i><i></i></div>
      </div>
    </section>

    <svg class="watermark" viewBox="0 0 1640 90" aria-hidden="true">
      <g fill="none">
        <ellipse cx="207" cy="-36" rx="184" ry="170" stroke="#d8d8d8" stroke-width="6" />
        <ellipse cx="207" cy="-32" rx="94" ry="108" stroke="#fcdcd8" stroke-width="44" />
        <ellipse cx="207" cy="-36" rx="116" ry="140" stroke="#d9d5d5" stroke-width="7" stroke-dasharray="16 1" />
        <ellipse cx="207" cy="-32" rx="66" ry="82" stroke="#dedede" stroke-width="12" stroke-dasharray="14 2" />
      </g>
      <text x="624" y="129" font-family="Liberation Sans, sans-serif" font-size="130" fill="#d5dcea">Institute</text>
      <path d="M912 4l-12 22h-10l14-24z" fill="#dfe5ee" />
      <path d="M1134 54c26 4 52 14 70 36h-56z" fill="#fbfad0" />
      <path d="M1259 0h38c-1 30 2 60 12 90h-14c-22-28-33-54-36-90z" fill="#fdfcd4" />
      <path d="M1366 0h42c-30 24-50 48-62 90h-10c-2-40 8-68 30-90z" fill="#f3fbd6" />
      <path d="M1440 8c28-8 54-8 90-8-4 18-12 32-32 44-50 2-86 10-124 46h-14c8-44 40-74 80-82z" fill="#dffbe0" />
      <path d="M1425 90c20-6 60-6 86 0z" fill="#d3f5ef" />
    </svg>

    <section class="shot second">
      <nav class="panel">
        <svg class="hat" viewBox="0 0 38 30" v-html="icons.hat"></svg>
        <a href="#" class="apps">Applications</a><a href="#" class="acts">Actions</a>
        <button v-for="l in launchers" :key="l.icon" class="launch" :aria-label="l.label"><svg viewBox="0 0 42 37" v-html="icons[l.icon]"></svg></button>
        <span class="grow"></span><i class="grip"></i>
        <svg class="alert" viewBox="0 0 44 38" v-html="icons.alert"></svg>
        <time>Fri Nov 19, 11:45 AM</time>
        <svg class="speaker" viewBox="0 0 34 34" v-html="icons.speaker"></svg>
      </nav>

      <div class="desktop">
        <div class="rtl-window">
          <div class="titlebar">
            <span class="frame-cell"><button aria-label="Window menu"><svg viewBox="0 0 20 20"><path d="M3 5l7 8 7-8v5l-7 7-7-7z" fill="#616a86" /></svg></button></span>
            <h2>Cadence Encounter(R) RTL Compiler v08.10-s121_1 - /root/7ec/rclabs/work</h2>
            <span class="frame-cell end">
              <button aria-label="Minimize"><svg viewBox="0 0 20 20"><path d="M3 12h14v5H3z" fill="#616a86" /></svg></button>
              <button aria-label="Maximize"><svg viewBox="0 0 20 20"><path d="M4 4h12v13H4zM4 6h12" fill="none" stroke="#616a86" stroke-width="3" /></svg></button>
              <button aria-label="Close"><svg viewBox="0 0 20 20"><path d="M4 4l12 12M16 4L4 16" stroke="#616a86" stroke-width="4" /></svg></button>
            </span>
          </div>
          <div class="client">
            <nav class="menus rtl">
              <a v-for="m in rtlMenus" :key="m" href="#"><u>{{ m[0] }}</u>{{ m.slice(1) }}</a>
              <span class="brand">c<b>a</b>dence<small>™</small></span>
            </nav>
            <div class="redline"></div>
            <div class="split">
              <div class="left-pane">
                <div class="tabs"><button>Hierarchy</button><button>HDL</button></div>
                <div class="pane-body">
                  <div class="hierarchy"><p>dff1</p><p class="leaf">mux_q_11_5 [mux]</p></div>
                </div>
              </div>
              <div class="sash"></div>
              <div class="right-pane">
                <div class="tabs"><button class="front">Schematic</button><button class="off">Physical</button></div>
                <div class="pane-body">
                  <div class="sch-tools">
                    <button v-for="t in schematicTools" :key="t.icon" :aria-label="t.label"><svg viewBox="0 0 42 38" v-html="icons[t.icon]"></svg></button>
                    <span class="grow"></span>
                    <input type="text" value="1" aria-label="Page" /><input type="text" value="1" aria-label="Pages" />
                  </div>
                  <div class="view">
                    <svg class="schematic" viewBox="0 0 1038 636" role="img" aria-label="Schematic">
                      <rect width="1038" height="636" fill="#000" />
                      <g fill="none" stroke="#f0a07a" stroke-width="2">
                        <path d="M56 636V1h923v635M76 15h883v606H76zM608 1v14M608 621v15M56 479h20M959 479h20" />
                        <rect x="663" y="152" width="128" height="74" /><rect x="678" y="360" width="128" height="76" />
                        <path d="M663 161h9v6h-9M663 185h9v6h-9M663 210h9v6h-9M791 185h-7v6h7M709 152v6h6v-6M737 152v6h9v-6M709 226v-6h6v6M737 226v-6h9v6" />
                        <path d="M678 371h7v6h-7M678 395h7v6h-7M678 420h7v6h-7M806 395h-8v6h8M725 360v8h6v-8M752 360v8h8v-8M725 436v-8h6v8M752 436v-8h8v8" />
                        <path d="M634 104v9M648 115h93v37M648 139h64v13M650 165h13M650 188h13M650 213h13M648 238h64v-12M648 262h93v-36M791 188h15M862 188h14" />
                        <path d="M662 325h94v35M662 348h66v12M662 373h16M662 398h16M666 423h12M662 448h66v-12M662 473h94v-37M806 398h14M862 398h14" />
                        <path d="M876 185h16l3 3-3 3h-16zM876 394h16l3 4-3 4h-16zM141 258h14l6 4-6 5h-14zM141 296h14l6 4-6 4h-14zM161 262h14M161 300h14" />
                        <path d="M626 93h16l-6 10h-4zM626 271h16l-8 13zM641 302h16l-8 12zM397 314h16l-8 12zM397 481h16l-8 14zM626 481h16l-8 14zM405 326v8M649 314v8" />
                        <path d="M249 458v38l42-19zM291 475h6v6h-6zM549 378v39l43-19zM593 395h5v6h-5zM233 478h16M297 478h10M535 398h14M598 398h8M340 466h13c11 2 11 12 11 12H340M364 472h11" />
                      </g>
                      <path d="M329 461h11v9h-11zM329 474h11v9h-11z" fill="#ffa37a" />
                      <g fill="none" stroke="#bff0c0" stroke-width="2">
                        <path d="M175 262H648M175 300H620M220 262V478H233M320 262V466H329M620 373V165H650M620 373H662M634 115h14M634 271V139H648M634 188h16M634 213h16M634 238h14M806 188h56" />
                        <path d="M634 481V325H662M634 348h28M634 448h28M634 473h28M649 322V423H666M606 398H662M820 398h42M405 334V373H418M405 481V423H418M307 478h22M504 398h31" />
                        <path d="M375 472H418" stroke-width="3" />
                      </g>
                      <path d="M215 258h10v9h-10zM315 258h10v9h-10zM615 296h10v9h-10z" fill="#c8ffc8" />
                      <path d="M434 335l57 27v74l-57 25zM418 373h16M418 423h16M491 398h13M418 473h44V448" fill="none" stroke="#18dc18" stroke-width="2" />
                      <g font-family="Liberation Mono, monospace" font-size="20" fill="#14dfe6" stroke="none">
                        <text x="696" y="171">q_reg</text><text x="702" y="206">flop</text>
                        <text x="705" y="380">qb_reg</text><text x="716" y="415">flop</text>
                      </g>
                    </svg>
                    <div class="vscroll"><svg viewBox="0 0 40 36" v-html="icons.up"></svg><i class="thumb"></i><svg viewBox="0 0 40 36" v-html="icons.down"></svg></div>
                  </div>
                  <div class="hscroll"><svg viewBox="0 0 40 36" v-html="icons.left"></svg><i class="thumb"></i><svg viewBox="0 0 40 36" v-html="icons.right"></svg></div>
                  <div class="command">
                    <input type="text" value="dff1 1" aria-label="Selected object" />
                    <button aria-label="Descend"><svg viewBox="0 0 30 36" v-html="icons.download"></svg></button>
                  </div>
                </div>
              </div>
            </div>
            <div class="rtl-status">
              <i class="ready"></i><span class="cell long"></span><span class="cell">Design is unmapped</span><span class="cell"></span>
            </div>
          </div>
        </div>
        <div class="behind"><i></i><b></b><u></u><i></i></div>
      </div>

      <div class="taskbar">
        <button class="desk" aria-label="Show desktop"><svg viewBox="0 0 40 36" v-html="icons.desktop"></svg></button><i class="grip"></i>
        <button v-for="(t, i) in rtlTasks" :key="t.text" class="task double" :class="{ active: i === 1 }"><svg viewBox="0 0 40 36" v-html="icons[t.icon]"></svg><span>{{ t.text }}</span></button>
        <span class="grow"></span>
        <div class="pager"><i class="on"></i><i></i><i></i><i></i></div>
      </div>
    </section>

    <footer>
      <div class="rule"></div>
      <div class="foot-text"><span>Bearys Institute of Technology, Dept. of ECE, Mangaluru</span><span>Page 38</span></div>
    </footer>
  </main>
</template>

<style>
body { background: #fff; }
</style>

<style scoped>
* { box-sizing: border-box; }
.sheet { margin: 80px 79px 80px 80px; border: 2px solid #000; padding: 0 80px 80px 164px; background: #fff; color: #000; font-family: "DejaVu Sans", sans-serif; }
button { font: inherit; color: inherit; padding: 0; border: 0; background: none; margin: 0; display: flex; align-items: center; justify-content: center; flex: none; }
a { color: inherit; text-decoration: none; }
i, svg { flex: none; display: block; }
u { text-underline-offset: 3px; text-decoration-thickness: 2px; }
.grow { flex: 1; }
.running-head { height: 129px; padding: 39px 46px 0 0; text-align: center; font: 32px/44px Lato, sans-serif; }
.shot { background: #e8e8e8; font-size: 22px; white-space: nowrap; overflow: hidden; }

.panel { display: flex; align-items: center; height: 42px; padding: 0 18px 0 14px; font-size: 23px; }
.second .panel { height: 45px; }
.hat { width: 38px; height: 30px; }
.apps { margin: 0 28px 0 12px; }
.acts { margin-right: 21px; }
.launch { width: 51px; }
.launch svg { width: 44px; height: 38px; }
.grip { width: 8px; height: 36px; background: repeating-linear-gradient(135deg, #888 0 2px, #e8e8e8 2px 6px); }
.alert { width: 46px; height: 39px; margin-left: 6px; }
.panel time { margin: 0 16px 0 11px; font-size: 25px; }
.speaker { width: 34px; height: 34px; }

.titlebar { display: flex; height: 38px; border-top: 2px solid #000; border-bottom: 2px solid #111; background: repeating-linear-gradient(135deg, #3a5795 0 2px, #5678bd 2px 4px, #486aaf 4px 9px); }
.titlebar h2 { flex: 1; margin: 0; padding-left: 22px; text-align: center; color: #fff; font-size: 23px; line-height: 38px; text-shadow: 2px 2px 1px #1b2d5c; border-left: 2px solid #1d2f5c; border-right: 2px solid #1d2f5c; background: linear-gradient(90deg, transparent 10%, #4a6ab0 32%, #4a6ab0 68%, transparent 90%); }
.frame-cell { display: flex; align-items: center; gap: 5px; width: 45px; padding-left: 3px; background: #c3c9dc; }
.frame-cell.end { width: 128px; padding-left: 6px; }
.frame-cell button { width: 36px; height: 26px; border: 2px solid #8790ab; border-radius: 4px; background: #f0f3fd; }
.frame-cell svg { width: 20px; height: 18px; }

.menus { display: flex; align-items: center; }
.sim { height: 47px; padding: 0 6px 0 12px; gap: 28px; }
.brand { margin-left: auto; font-weight: bold; font-size: 27px; color: #222; line-height: 30px; }
.brand b { position: relative; }
.brand b::before { content: ""; position: absolute; left: 3px; top: 3px; width: 12px; height: 3px; background: #d6282e; }
.brand small { font-size: 8px; vertical-align: 12px; }
.redline { height: 6px; background: #c80000; }

.bar { display: flex; height: 53px; margin-left: 2px; gap: 2px; }
.bar.tall { height: 57px; }
.group { display: flex; align-items: center; padding-right: 3px; border: 2px solid #999; border-top-color: #f8f8f8; border-left-color: #f8f8f8; flex: none; }
.group.wide { flex: 1; }
.handle { width: 4px; align-self: stretch; margin: 3px 5px 5px 6px; border-left: 2px solid #fff; border-right: 2px solid #888; }
.sep { width: 4px; align-self: stretch; margin: 3px 8px 5px 6px; border-left: 2px solid #888; border-right: 2px solid #fff; }
.tool { width: 53px; height: 46px; }
.tool svg { width: 38px; height: 36px; }
.tool svg.big { width: 46px; height: 38px; }
.tool svg.half { width: 30px; height: 32px; }
.pressed { border: 2px solid #888; border-right-color: #fff; border-bottom-color: #fff; background: #f2f0f2; }
.drop { width: 56px; }
.kit { width: 70px; gap: 4px; }
.tools .kit { margin-left: 5px; }
.add { margin-left: 7px; }
.cursors { width: 158px; }
.send { align-self: flex-start; margin: 6px 0 0 20px; font-size: 15px; line-height: 18px; width: 68px; }
.sendset { display: flex; flex: 1; justify-content: space-between; padding: 0 6px 0 2px; }
.caret { width: 0; height: 0; border: 8px solid transparent; border-top: 9px solid #000; border-bottom: 0; }
.caret.small { border-width: 7px 5px 0; }
.caret.up { border-width: 0 6px 6px; border-bottom: 6px solid #333; }
.caret.white { border-top-color: #fff; }
.combo { display: flex; align-items: center; height: 34px; border: 2px solid #999; background: #eee; padding-right: 7px; margin-left: 8px; }
.combo select { flex: 1; min-width: 0; appearance: none; border: 0; background: none; font: inherit; color: #000; padding: 0 0 0 8px; }
.signal { width: 113px; }
.value { width: 111px; margin-left: 6px; }
.cursor { width: 114px; margin-left: 2px; }
.unit { width: 74px; margin-left: 3px; }
.entry { display: flex; height: 36px; border: 3px solid #888; border-right-color: #fff; border-bottom-color: #fff; background: #fff; }
.entry input { flex: 1; min-width: 0; border: 0; background: none; font: inherit; padding: 0 0 0 4px; }
.entry button { width: 30px; background: #c00000; border: 3px solid #f06464; border-right-color: #800; border-bottom-color: #800; }
.first { width: 190px; }
.names .first { margin-left: 10px; margin-right: 9px; }
.later { width: 215px; margin: 0 5px; }
.names { width: 654px; }
.names label, .wide label { margin-left: 4px; font-size: 23px; }
.names label { width: 174px; }
.wide label { width: 160px; }
.find { width: 62px; }
.time { width: 57px; }
.timea { width: 682px; }
.flagtwo { display: flex; align-items: flex-end; width: 45px; line-height: 24px; }
.flagtwo svg { width: 32px; height: 38px; }
.eq { width: 28px; text-align: center; font-size: 20px; }
.goto { width: 70px; gap: 5px; margin-left: 4px; }
.edge { width: 57px; }
.run { width: 634px; }
.clock { width: 60px; height: 36px; margin-right: 8px; }
.now { font-size: 22px; }
.timelabel { margin: 0 14px 0 4px; }
.panes { width: 48px; height: 34px; }
.more { width: 36px; font-size: 30px; line-height: 30px; padding-bottom: 8px; justify-content: flex-start; }

.workspace { display: flex; margin: 4px 0 0 2px; background: #e8e6e8; }
.dock { width: 67px; background: #999; display: flex; flex-direction: column; }
.dock-head { height: 32px; background: #858585; padding: 4px 6px; }
.dock-head svg { width: 56px; height: 24px; }
.dock-body { position: relative; flex: 1; margin: 5px 0 5px; display: flex; flex-direction: column; gap: 3px; }
.dock-body::before { content: ""; position: absolute; inset: 0 auto 0 0; width: 12px; background: #e8e6e8; border-right: 2px solid #000; border-bottom-right-radius: 6px; }
.dock-tab { position: relative; width: 49px; height: 47px; margin-left: 10px; background: #e8e6e8; border: 2px solid #000; border-top-color: #fff; border-left-color: #222; border-radius: 0 8px 8px 0; }
.dock-tab:first-child { width: 63px; height: 56px; margin-left: 0; padding-left: 6px; border-left: 0; }
.dock-tab svg { width: 34px; height: 32px; }
.signals { width: 547px; padding-left: 9px; display: flex; flex-direction: column; }
.info { display: grid; grid-template-columns: 30px 151px 20px auto; grid-auto-rows: 25px; align-items: center; justify-content: start; height: 79px; padding: 13px 0 0 2px; font-size: 19px; }
.info .what { text-align: right; }
.info .caret { margin-left: 2px; border-width: 8px 7px 0; }
.info button { width: 28px; height: 24px; border: 1px solid #888; border-top-color: #fff; border-left-color: #fff; }
.info button svg { width: 24px; height: 22px; }
.columns { flex: 1; display: flex; gap: 13px; }
.col { display: flex; flex-direction: column; }
.name-col { width: 358px; }
.value-col { width: 154px; }
.dark { flex: 1; background: #000; }
table { width: 100%; border-collapse: separate; border-spacing: 0; }
th { height: 37px; padding: 0 0 0 10px; text-align: left; font-weight: normal; font-size: 21px; line-height: 33px; background: #b2b0b2; border: 2px solid #999; }
th .caret { display: inline-block; margin-left: 4px; vertical-align: 3px; border-width: 8px 7px 0; }
tbody tr { background: #ffffb8; }
td { padding: 0 0 3px 6px; height: 33px; font-size: 17px; line-height: 30px; }
.name-col td { display: flex; align-items: center; padding: 3px 0 0 17px; }
.name-col td svg { width: 26px; height: 20px; margin: 0 15px 0 0; box-shadow: -4px 0 0 -1px #ff0, 4px 0 0 -1px #ff0; }
.name-col tbody tr:last-child td, .value-col tbody tr:last-child td { height: 34px; }
.twig { width: 32px; height: 33px; border-left: 1px dotted #999; background: repeating-linear-gradient(90deg, #999 0 1px, transparent 1px 4px) 0 50% / 100% 1px no-repeat; }
.insertion { height: 4px; margin: -4px 0 0 29px; position: relative; background: #d00000; border-top: 1px solid #300; }
.insertion::before { content: ""; position: absolute; left: 0; bottom: 0; width: 13px; height: 8px; border-radius: 6px 6px 0 0; background: #f00; }
.hscroll { display: flex; align-items: center; height: 28px; margin: 2px 1px 4px 2px; background: #bbb; border: 2px solid #888; border-right-color: #fff; border-bottom-color: #fff; }
.hscroll svg { width: 28px; height: 24px; }
.thumb { flex: 1; align-self: stretch; background: #e6e4e6; border: 2px solid #fff; border-right-color: #888; border-bottom-color: #888; }
.pair { display: flex; align-items: center; gap: 10px; }
.pair .hscroll { width: 114px; }
.lines { width: 24px; height: 20px; }
.waves { flex: 1; min-width: 0; }
.plot { width: 100%; height: auto; }
.timescroll { display: flex; height: 34px; border-top: 2px solid #888; padding-bottom: 4px; }
.timescroll .arrow { width: 38px; height: 28px; background: #bbb; }
.track { flex: 1; display: flex; justify-content: space-between; align-items: flex-end; height: 28px; background: repeating-linear-gradient(90deg, #111 0 18px, #eee 18px 20px) 0 100% / 100% 3px no-repeat, linear-gradient(#000 0 2px, #fff 2px 5px, #e6e4e6 5px 23px, #888 23px); }
.mark { width: 22px; height: 20px; margin: 0 -9px -4px; position: relative; }
.vscroll { display: flex; flex-direction: column; align-items: center; }
.sim-v { width: 37px; padding: 118px 5px 37px 2px; border-right: 2px solid #999; }
.vscroll svg { width: 26px; height: 22px; background: #bbb; }
.vscroll .thumb { width: 24px; align-self: center; }
.sim-v svg { width: 28px; height: 24px; background: #c4c4c4; }

.statusbar { display: flex; height: 52px; margin-left: 2px; border: 2px solid #888; border-left: 0; border-right-width: 1px; box-shadow: inset 0 2px 0 #fff, inset 0 4px 0 #aaa; background: #e8e6e8; }
.aim { width: 50px; display: flex; align-items: center; justify-content: center; border-right: 2px solid #999; }
.aim svg { width: 32px; height: 32px; }
.count { display: flex; align-items: center; width: 230px; padding-left: 6px; font-size: 22px; border-left: 2px solid #888; }
.taskbar { display: flex; height: 40px; background: #e8e8e8; }
.desk { width: 63px; border: 2px solid #555; border-bottom: 0; box-shadow: inset 2px 2px 0 #fff; }
.desk svg { width: 40px; height: 34px; }
.taskbar .grip { margin: 2px 7px 0; }
.task { flex: 1 1 0; min-width: 0; justify-content: flex-start; overflow: hidden; padding: 0 2px 0 5px; border: 2px solid #555; border-bottom: 0; background: #e6e6e6; box-shadow: inset 1px 2px 0 #fff; font-size: 24px; }
.task svg { width: 32px; height: 34px; margin-right: 7px; }
.task.active { background: #cfcfcf; }
.task.double { flex: none; width: 34%; }
.pager { display: flex; width: 226px; height: 38px; margin: 2px 0 0 6px; flex: none; }
.pager i { flex: 1; background: #a2a0a2; border-right: 2px solid #e8e8e8; }
.pager .on { background: #4664b0; border: 3px solid #223260; box-shadow: inset 0 0 0 2px #fff; }

.watermark { width: 100%; height: auto; overflow: hidden; }

.desktop { display: flex; background: #e8e8e8; }
.rtl-window { flex: 1; min-width: 0; border: 2px solid #000; border-bottom: 0; border-radius: 10px 10px 0 0; background: #dde0e6; overflow: hidden; }
.rtl-window .titlebar { height: 40px; border-top: 0; padding: 0 4px 0 3px; background-color: #c3c9dc; }
.rtl-window .frame-cell { width: 46px; }
.rtl-window .frame-cell.end { width: 126px; }
.client { margin: 0 9px 0 9px; border-left: 2px solid #888; background: #efefef; font-size: 15px; }
.menus.rtl { height: 44px; padding: 0 6px 0 12px; gap: 18px; border: 3px solid #fff; border-right-color: #888; border-bottom-color: #888; }
.rtl .brand { font-size: 25px; }
.rtl-window .redline { height: 8px; }
.split { display: flex; padding-top: 3px; }
.left-pane { width: 512px; padding-left: 6px; display: flex; flex-direction: column; }
.tabs { display: flex; gap: 2px; height: 40px; }
.tabs button { height: 40px; padding: 0 12px 0 16px; border-top: 3px solid #fff; border-left: 3px solid #fff; border-right: 4px solid #999; border-radius: 8px 4px 0 0; }
.left-pane .tabs button:last-child { padding: 0 17px; }
.tabs .front { border: 2px solid #777; border-bottom: 0; padding: 0 18px 0 20px; }
.tabs .off { color: #999; padding: 0 18px; }
.pane-body { flex: 1; border: 3px solid #fff; border-right-color: #888; border-bottom-color: #888; }
.left-pane .pane-body { padding: 9px 3px 3px; display: flex; margin-right: 3px; }
.hierarchy { flex: 1; background: #fff; border-left: 3px solid #888; border-top: 3px solid #888; padding-left: 47px; font: 17px/24px "Liberation Mono", monospace; -webkit-text-stroke: 1px #000; }
.hierarchy p { margin: 0; }
.leaf { position: relative; padding-left: 38px; }
.leaf::before { content: ""; position: absolute; left: 16px; top: -2px; width: 22px; height: 14px; border-left: 2px solid #000; border-bottom: 2px solid #000; }
.sash { position: relative; width: 4px; border-left: 3px solid #222; border-right: 1px solid #999; }
.sash::before { content: ""; position: absolute; left: -10px; top: 14px; width: 15px; height: 15px; background: #e8e8e8; border: 2px solid #fff; border-right-color: #777; border-bottom-color: #777; }
.right-pane { flex: 1; min-width: 0; padding: 0 4px 0 0; display: flex; flex-direction: column; }
.right-pane .pane-body { padding: 0 2px 2px 3px; }
.sch-tools { display: flex; align-items: center; height: 67px; padding: 4px 8px 0 4px; }
.sch-tools button { width: 62px; }
.sch-tools svg { width: 42px; height: 38px; }
.sch-tools input { width: 72px; height: 28px; margin-left: 4px; padding: 0 0 0 2px; border: 3px solid #888; border-right-color: #f8f8f8; border-bottom-color: #f8f8f8; font: 17px "DejaVu Sans", sans-serif; }
.view { display: flex; gap: 5px; }
.schematic { flex: 1; min-width: 0; height: auto; }
.view .vscroll { width: 28px; margin-right: 2px; border: 2px solid #999; border-right-color: #eee; }
.right-pane .thumb { background: #c1c1c1; }
.right-pane .hscroll { height: 24px; margin: 5px 39px 3px 2px; }
.right-pane .hscroll svg { width: 24px; height: 20px; }
.command { display: flex; align-items: center; gap: 5px; }
.command input { flex: 1; min-width: 0; height: 30px; margin-left: 5px; border: 3px solid #888; border-right-color: #fff; border-bottom-color: #fff; background: #efefef; font: 15px "DejaVu Sans", sans-serif; padding: 0 0 0 3px; }
.command button { width: 38px; height: 37px; background: #c80000; border: 3px solid #f05050; border-right-color: #700; border-bottom-color: #700; }
.command svg { width: 30px; height: 30px; }
.rtl-status { display: flex; gap: 11px; padding: 14px 4px 5px 6px; }
.ready { width: 49px; height: 43px; background: #0f0; }
.cell { flex: 1; height: 43px; display: flex; align-items: center; justify-content: center; border: 3px solid #888; border-right-color: #fff; border-bottom-color: #fff; }
.cell.long { flex: 2 1 16px; }
.behind { width: 12px; display: flex; flex-direction: column; padding-top: 87px; }
.behind i { height: 26px; border: 2px solid #777; background: #eee; }
.behind b { flex: 1; background: #c1c1c1; }
.behind u { height: 54px; border: 2px solid #777; background: #eee; }

footer { margin: 51px 74px 0 -10px; font: 38px/50px "Liberation Serif", serif; }
.rule { height: 15px; border-top: 10px solid #632423; border-bottom: 2px solid #632423; }
.foot-text { display: flex; justify-content: space-between; padding: 2px 7px 0; }
</style>
